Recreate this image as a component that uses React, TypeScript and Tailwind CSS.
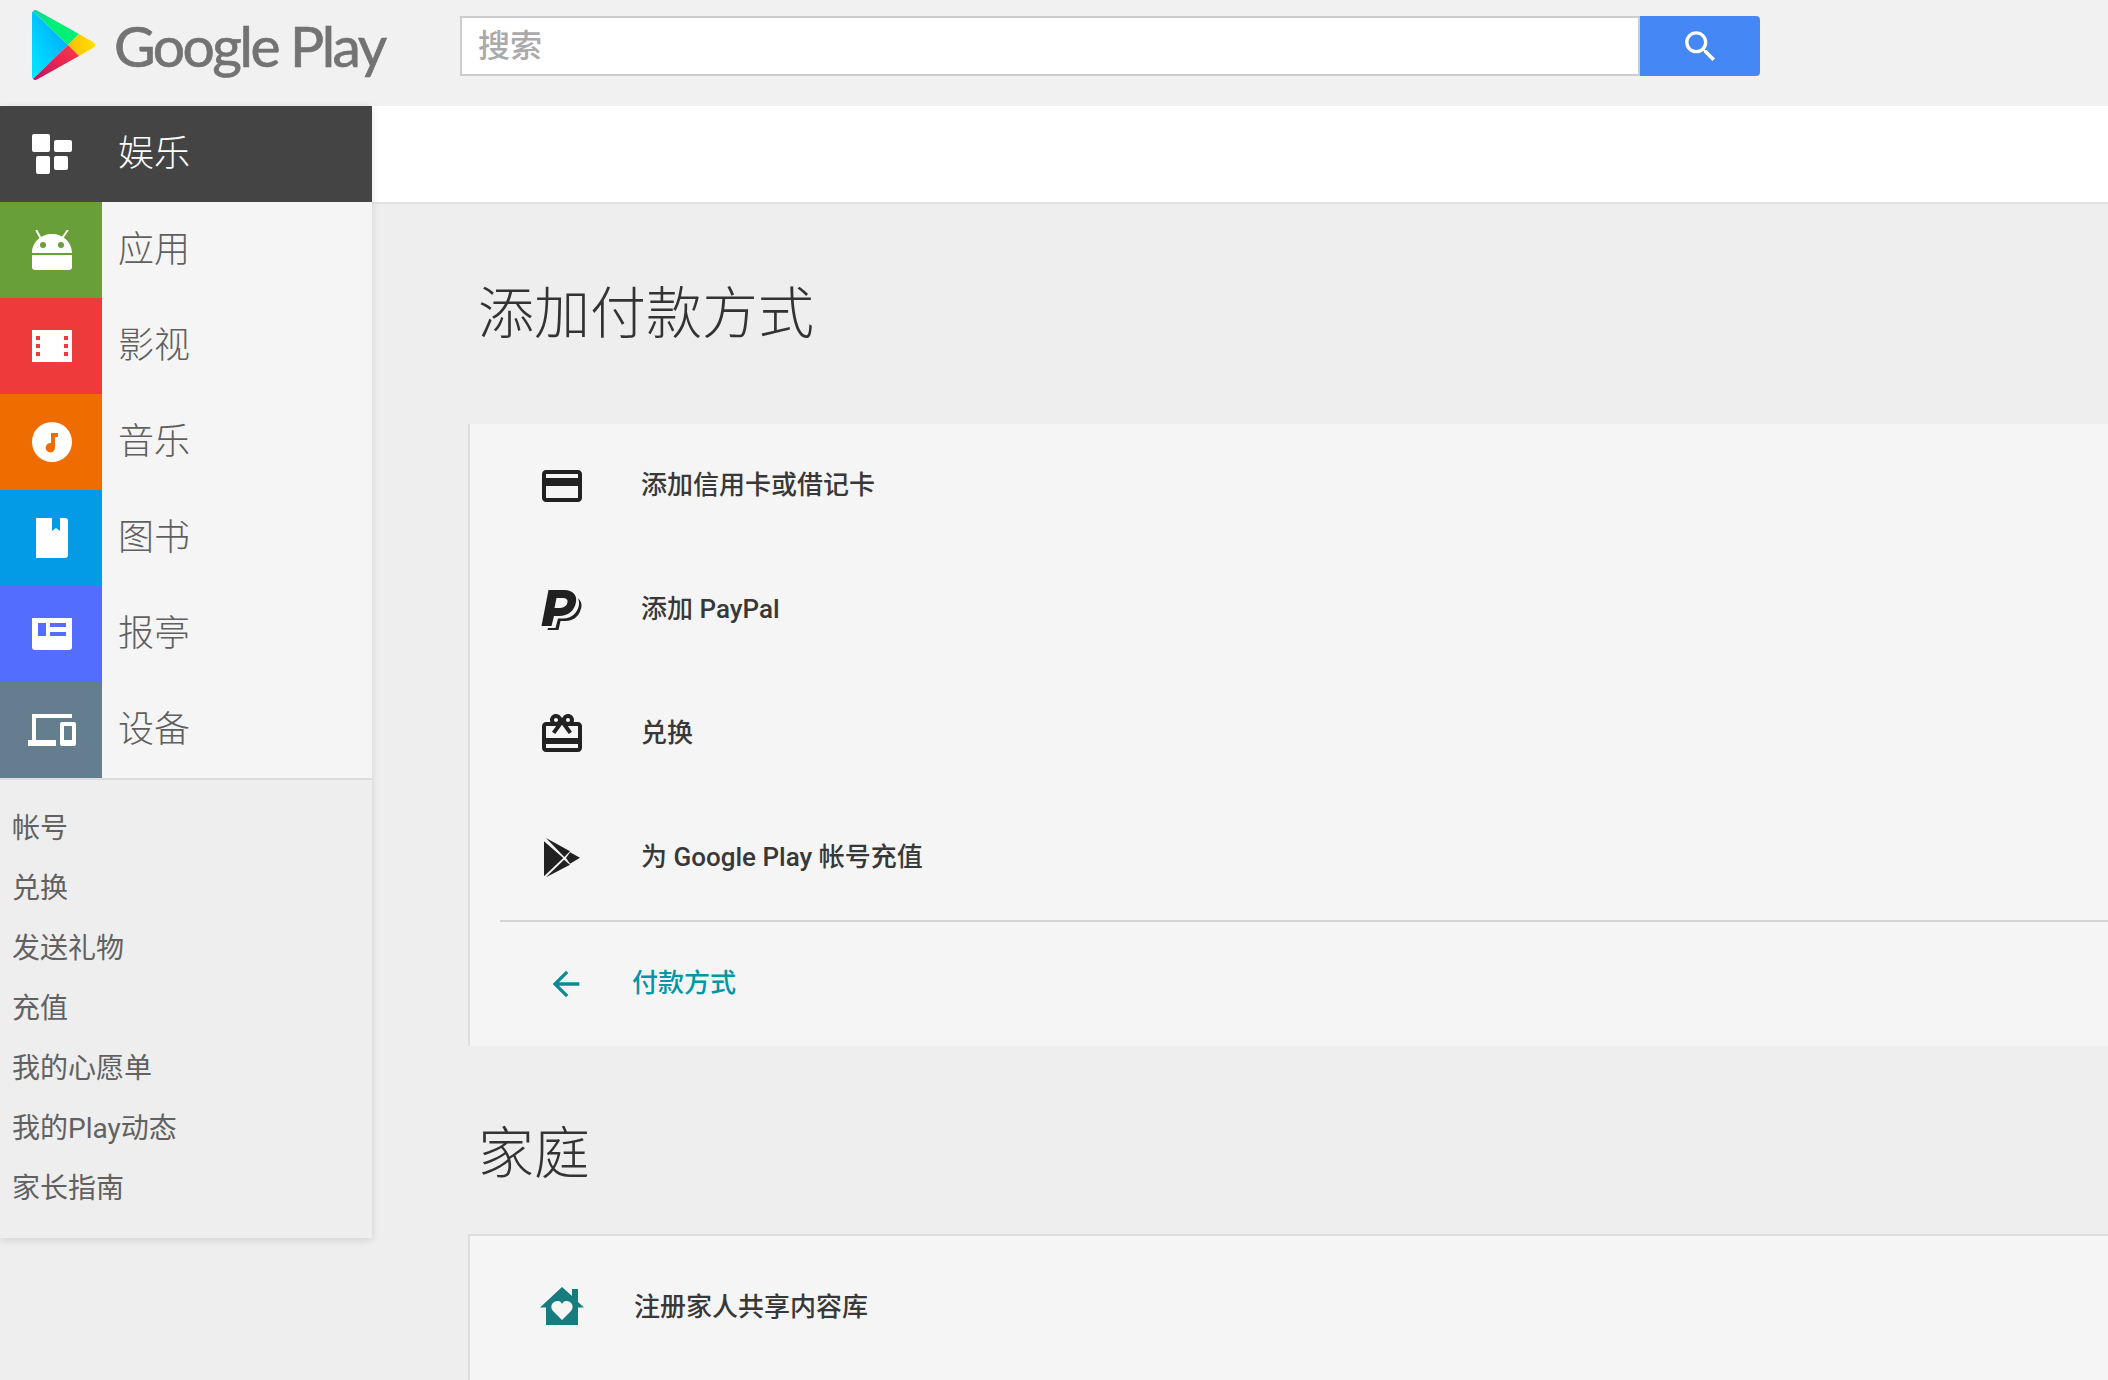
import type { ReactNode } from 'react';

const font = 'font-["Roboto","Noto_Sans_CJK_SC",sans-serif]';

const AppsIcon = () => (
  <svg width="40" height="40" viewBox="0 0 40 40" fill="#fff">
    <rect x="0" y="0" width="18" height="18" rx="2" />
    <rect x="22" y="6" width="18" height="12" rx="2" />
    <rect x="4" y="22" width="14" height="18" rx="2" />
    <rect x="22" y="22" width="14" height="14" rx="2" />
  </svg>
);

const AndroidIcon = () => (
  <svg width="40" height="40" viewBox="0 0 40 40" fill="#fff">
    <path d="M4.5 .5 8 7M35.5 .5 31 7" stroke="#fff" strokeWidth="2" strokeLinecap="round" />
    <path fillRule="evenodd" d="M0 23C0 12 9 4 20 4s20 8 20 19ZM11 12a3 3 0 1 0 0 6 3 3 0 0 0 0-6Zm18 0a3 3 0 1 0 0 6 3 3 0 0 0 0-6Z" />
    <path d="M0 25h40v12a3 3 0 0 1-3 3H3a3 3 0 0 1-3-3Z" />
  </svg>
);

const FilmIcon = () => (
  <svg width="40" height="32" viewBox="0 0 40 32" fill="#fff">
    <path
      fillRule="evenodd"
      d="M0 0h40v32H0ZM4 6v4h4V6Zm0 8v4h4v-4Zm0 8v4h4v-4ZM32 6v4h4V6Zm0 8v4h4v-4Zm0 8v4h4v-4Z"
    />
  </svg>
);

const MusicIcon = () => (
  <svg width="40" height="40" viewBox="0 0 40 40" fill="#fff">
    <path
      fillRule="evenodd"
      d="M20 0a20 20 0 1 0 0 40 20 20 0 0 0 0-40Zm-1 11h7v4h-3v10.7a4.7 4.7 0 1 1-4-4.6Z"
    />
  </svg>
);

const BookIcon = () => (
  <svg width="32" height="40" viewBox="0 0 32 40" fill="#fff">
    <path d="M0 0h16v13l4-3 4 3V0h5a3 3 0 0 1 3 3v34a3 3 0 0 1-3 3H0Z" />
  </svg>
);

const NewsIcon = () => (
  <svg width="40" height="32" viewBox="0 0 40 32" fill="#fff">
    <path
      fillRule="evenodd"
      d="M0 0h40v29a3 3 0 0 1-3 3H3a3 3 0 0 1-3-3ZM6 5v13h8V5Zm12 0v4h16V5Zm0 9v4h16v-4Z"
    />
  </svg>
);

const DevicesIcon = () => (
  <svg width="48" height="32" viewBox="0 0 48 32" fill="#fff">
    <path d="M4 0h40v4H8v22h20v6H0v-6h4Z" />
    <path
      fillRule="evenodd"
      d="M34 8h12a2 2 0 0 1 2 2v20a2 2 0 0 1-2 2H34a2 2 0 0 1-2-2V10a2 2 0 0 1 2-2Zm2 4v14h8V12Z"
    />
  </svg>
);

const PlayLogo = () => (
  <svg width="64" height="72" viewBox="0 0 64 72">
    <defs>
      <linearGradient id="pb" x1="1" y1="0" x2="0" y2="1">
        <stop offset="0" stopColor="#00a0ff" />
        <stop offset="1" stopColor="#00e9ff" />
      </linearGradient>
      <linearGradient id="pg" x1="0" y1="0" x2="1" y2="1">
        <stop offset="0" stopColor="#1bd0a0" />
        <stop offset="0.4" stopColor="#00f076" />
      </linearGradient>
      <linearGradient id="py" x1="0" y1="0" x2="1" y2="0">
        <stop offset="0" stopColor="#ffbd00" />
        <stop offset="1" stopColor="#ffe000" />
      </linearGradient>
      <linearGradient id="pr" x1="1" y1="0" x2="0" y2="1">
        <stop offset="0" stopColor="#ff3a44" />
        <stop offset="1" stopColor="#c31162" />
      </linearGradient>
    </defs>
    <path d="M1 2C.3 3 0 3.5 0 5v62c0 1.500.3 2 1 3l35-34Z" fill="url(#pb)" />
    <path d="M1 2c1-1 2.500-1.300 4-.5L47 25 36 36Z" fill="url(#pg)" />
    <path d="M47 25 61 33c3 2 3 4 0 6l-14 8-11-11Z" fill="url(#py)" />
    <path d="M1 70c1 1 2.500 1.300 4 .5L47 47 36 36Z" fill="url(#pr)" />
  </svg>
);

const SearchIcon = () => (
  <svg width="41" height="41" viewBox="0 0 24 24" fill="#fff">
    <path d="M15.5 14h-.79l-.28-.27C15.41 12.59 16 11.11 16 9.5 16 5.91 13.09 3 9.5 3S3 5.91 3 9.5 5.910 16 9.500 16c1.610 0 3.090-.59 4.230-1.570l.27.28v.79l5 4.990L20.490 19l-4.990-5zm-6 0C7.010 14 5 11.990 5 9.500S7.010 5 9.500 5 14 7.010 14 9.500 11.990 14 9.500 14z" />
  </svg>
);

const CardIcon = () => (
  <svg width="48" height="48" viewBox="0 0 24 24" fill="#212121">
    <path d="M20 4H4c-1.110 0-1.990.89-1.990 2L2 18c0 1.110.89 2 2 2h16c1.110 0 2-.89 2-2V6c0-1.110-.89-2-2-2zm0 14H4v-6h16v6zm0-10H4V6h16v2z" />
  </svg>
);

const PaypalIcon = () => (
  <svg width="48" height="48" viewBox="-3.500 -4 48 48" fill="#212121">
    <path
      fillRule="evenodd"
      d="M7 0h16c8 0 13 5 11.500 12C33 21 26 26 18 26h-5.500L10 36H0ZM15 8l-2 10h4c5 0 8.500-2 9-6 .5-3-2-4-5-4Z"
    />
    <path d="M36 8c4 3 5 7 3 12-2 7-8 11-15 11h-5l-2 9H6l.5-2H14l2.500-9.500H22c8 0 14-5.500 15.500-13.500.5-3-.5-5-1.500-7.500Z" />
  </svg>
);

const RedeemIcon = () => (
  <svg width="48" height="48" viewBox="0 0 24 24" fill="#212121">
    <path d="M20 6h-2.180c.11-.31.18-.65.18-1 0-1.660-1.340-3-3-3-1.050 0-1.960.54-2.500 1.350l-.5.67-.5-.68C10.960 2.540 10.050 2 9 2 7.340 2 6 3.340 6 5c0 .35.07.69.18 1H4c-1.110 0-1.990.89-1.990 2L2 19c0 1.110.89 2 2 2h16c1.110 0 2-.89 2-2V8c0-1.110-.89-2-2-2zm-5-2c.55 0 1 .45 1 1s-.45 1-1 1-1-.45-1-1 .45-1 1-1zM9 4c.55 0 1 .45 1 1s-.45 1-1 1-1-.45-1-1 .45-1 1-1zm11 15H4v-2h16v2zm0-5H4V8h5.080L7 10.830 8.620 12 11 8.760l1-1.360 1 1.360L15.380 12 17 10.830 14.920 8H20v6z" />
  </svg>
);

const PlayDarkIcon = () => (
  <svg width="48" height="48" viewBox="-6 -4 48 48" fill="#212121">
    <path d="M0 3.300 19.300 20 0 38.300Z" />
    <path d="M2 0 26 13.300 20.300 19Z" />
    <path d="M26 14.300 36 19.700 26 25.700 22 20Z" />
    <path d="M2 39.300 20 21.700 26 26.700Z" />
  </svg>
);

const BackIcon = () => (
  <svg width="40" height="40" viewBox="0 0 24 24" fill="#0b8a94">
    <path d="M20 11H7.830l5.590-5.590L12 4l-8 8 8 8 1.410-1.410L7.830 13H20v-2z" />
  </svg>
);

const FamilyIcon = () => (
  <svg width="44" height="38" viewBox="0 0 44 38" fill="#167c80">
    <path
      fillRule="evenodd"
      d="M22 0 32 9V2h6v13l6 5.500h-6V38H6V20.500H0ZM22 33l9-9c4-5 0-10.500-5-10-2 .2-3 1-4 3-1-2-2-2.800-4-3-5-.5-9 5-5 10Z"
    />
  </svg>
);

const categories: { label: string; bg: string; icon: ReactNode }[] = [
  { label: '应用', bg: 'bg-[#689f38]', icon: <AndroidIcon /> },
  { label: '影视', bg: 'bg-[#ef3a3c]', icon: <FilmIcon /> },
  { label: '音乐', bg: 'bg-[#ef6c00]', icon: <MusicIcon /> },
  { label: '图书', bg: 'bg-[#039be5]', icon: <BookIcon /> },
  { label: '报亭', bg: 'bg-[#536dfe]', icon: <NewsIcon /> },
  { label: '设备', bg: 'bg-[#647d8f]', icon: <DevicesIcon /> },
];

const links = ['帐号', '兑换', '发送礼物', '充值', '我的心愿单', '我的Play动态', '家长指南'];

const payments: { label: string; icon: ReactNode }[] = [
  { label: '添加信用卡或借记卡', icon: <CardIcon /> },
  { label: '添加 PayPal', icon: <PaypalIcon /> },
  { label: '兑换', icon: <RedeemIcon /> },
  { label: '为 Google Play 帐号充值', icon: <PlayDarkIcon /> },
];

const Sidebar = () => (
  <aside className="relative z-10 flex flex-col w-[372px] h-[1132px] shrink-0 bg-[#eeeeee] shadow-[0_2px_8px_rgba(0,0,0,0.12)]">
    <div className="flex items-center h-24 bg-[#444444] text-white">
      <span className="flex items-center justify-center w-[104px] shrink-0">
        <AppsIcon />
      </span>
      <span className="ml-[14px] text-[36px] font-light">娱乐</span>
    </div>
    {categories.map((item) => (
      <div key={item.label} className="flex items-center h-24 bg-[#f5f5f5]">
        <span className={`flex items-center justify-center w-[102px] h-full pl-0.5 shrink-0 ${item.bg}`}>
          {item.icon}
        </span>
        <span className="ml-4 text-[36px] font-light text-[#5f5f5f]">{item.label}</span>
      </div>
    ))}
    <div className="flex flex-col pt-[19px] pl-3 border-t-2 border-[#dcdcdc]">
      {links.map((link) => (
        <span key={link} className="flex items-center h-[60px] text-[28px] text-[#616161]">
          {link}
        </span>
      ))}
    </div>
  </aside>
);

export default function App() {
  return (
    <div className={`h-[1380px] w-[2108px] overflow-hidden bg-[#eeeeee] ${font}`}>
      <header className="flex items-center h-[106px] pb-4 bg-[#f1f1f1]">
        <span className="ml-8 shrink-0">
          <PlayLogo />
        </span>
        <span className="ml-[18px] w-[346px] shrink-0 text-[57px] leading-none tracking-[-2.500px] text-[#737373] [-webkit-text-stroke:0.7px_#737373] font-['Lato',sans-serif]">
          Google Play
        </span>
        <div className="flex h-[60px] mt-0.5">
          <input
            placeholder="搜索"
            className="w-[1180px] px-4 text-[32px] font-medium bg-white border-2 border-[#cccccc] outline-none placeholder:text-[#aaaaaa]"
          />
          <button className="flex items-center justify-center w-[120px] rounded-r bg-[#4587f5]">
            <SearchIcon />
          </button>
        </div>
      </header>

      <div className="flex">
        <Sidebar />
        <main className="flex flex-col flex-1 min-w-0">
          <div className="h-24 bg-white border-b-2 border-[#e2e2e2] box-content" />
          <div className="flex flex-col pl-24">
            <h1 className="pt-[82px] pb-[82px] pl-[10px] text-[56px] leading-[56px] font-light text-[#333333]">
              添加付款方式
            </h1>
            <section className="flex flex-col bg-[#f5f5f5] border-l-2 border-[#dddddd]">
              {payments.map((row) => (
                <div key={row.label} className="flex items-center h-[124px] pl-[68px]">
                  <span className="flex w-[48px] shrink-0">{row.icon}</span>
                  <span className="ml-[55px] -mt-0.5 text-[26px] font-medium text-[#383838]">{row.label}</span>
                </div>
              ))}
              <div className="ml-[30px] h-0.5 bg-[#d4d4d4]" />
              <div className="flex items-center h-[124px] pl-[76px]">
                <BackIcon />
                <span className="ml-[46px] -mt-0.5 text-[26px] font-medium text-[#0097a7]">付款方式</span>
              </div>
            </section>
            <h2 className="pt-[80px] pb-[52px] pl-[10px] text-[56px] leading-[56px] font-light text-[#333333]">
              家庭
            </h2>
            <section className="flex items-center h-[200px] pb-[58px] pl-[70px] bg-[#f5f5f5] border-t-2 border-l-2 border-[#dddddd]">
              <FamilyIcon />
              <span className="ml-[50px] mt-0.5 text-[26px] font-medium text-[#383838]">注册家人共享内容库</span>
            </section>
          </div>
        </main>
      </div>
    </div>
  );
}
